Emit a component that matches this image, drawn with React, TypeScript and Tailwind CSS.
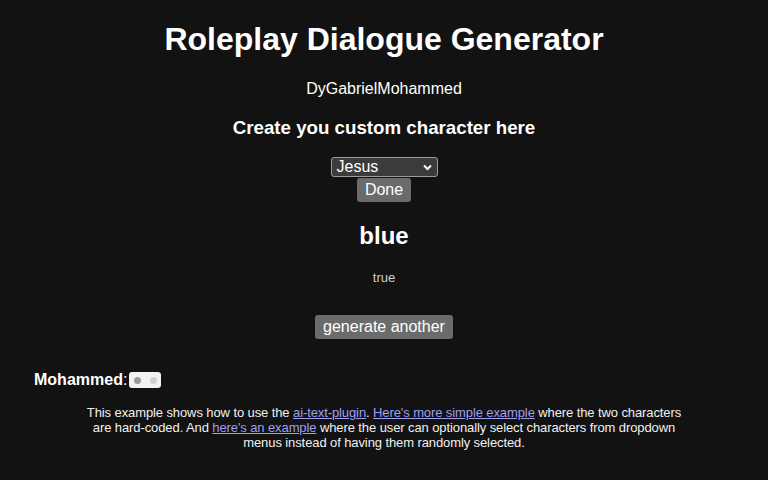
import React from "react";

export default function App() {
  return (
    <div
      className="min-h-[480px] w-full bg-[#121212] text-white"
      style={{ fontFamily: '"Liberation Sans", Arial, sans-serif' }}
    >
      <div className="flex flex-col items-center pt-[21px]">
        <h1 className="text-[32px] font-bold leading-[37px]">Roleplay Dialogue Generator</h1>
        <div className="mt-[22px] text-[16px] leading-[18px]">DyGabrielMohammed</div>
        <h3 className="mt-[19px] text-[18.72px] font-bold leading-[22px]">Create you custom character here</h3>
        <div className="mt-[18px] relative w-[107px] h-[20px] rounded-[3px] border border-[#9a9a9a] bg-[#3b3b3b] flex items-center">
          <span className="pl-[5px] text-[16px] leading-[18px]">Jesus</span>
          <svg className="absolute right-[5px] top-[6px]" width="9" height="7" viewBox="0 0 9 7">
            <path d="M1 1.5 L4.5 5 L8 1.5" stroke="white" strokeWidth="2" fill="none" />
          </svg>
        </div>
        <button className="mt-[1px] h-[24px] w-[54px] rounded-[3px] bg-[#6b6b6b] text-[16px] leading-[18px] text-white">
          Done
        </button>
        <h2 className="mt-[20px] text-[24px] font-bold leading-[28px]">blue</h2>
        <div className="mt-[20px] text-[13px] leading-[15px] text-[#d0d0d0]">true</div>
        <button className="mt-[30px] h-[24px] w-[138px] rounded-[3px] bg-[#6b6b6b] text-[16px] leading-[18px] text-white">
          generate another
        </button>
      </div>
      <div className="mt-[32px] flex items-center pl-[34px]">
        <span className="text-[16px] font-bold leading-[18px]">Mohammed</span>
        <span className="text-[16px] leading-[18px]">:</span>
        <span className="ml-[2px] flex h-[16px] w-[32px] items-center justify-center gap-[9px] rounded-[3px] bg-[#f2f2f2]">
          <span className="h-[7px] w-[7px] rounded-full bg-[#9a9a9a]" />
          <span className="h-[7px] w-[7px] rounded-full bg-[#cfcfcf]" />
        </span>
      </div>
      <p className="mx-auto mt-[16px] w-[604px] text-center text-[13px] leading-[15px] tracking-[-0.1px] text-[#f0f0f0]">
        This example shows how to use the{" "}
        <a className="text-[#9f9ff0] underline" href="#">ai-text-plugin</a>.{" "}
        <a className="text-[#9f9ff0] underline" href="#">Here's more simple example</a> where the two characters are
        hard-coded. And{" "}
        <a className="text-[#9f9ff0] underline" href="#">here's an example</a> where the user can optionally select
        characters from dropdown menus instead of having them randomly selected.
      </p>
    </div>
  );
}
